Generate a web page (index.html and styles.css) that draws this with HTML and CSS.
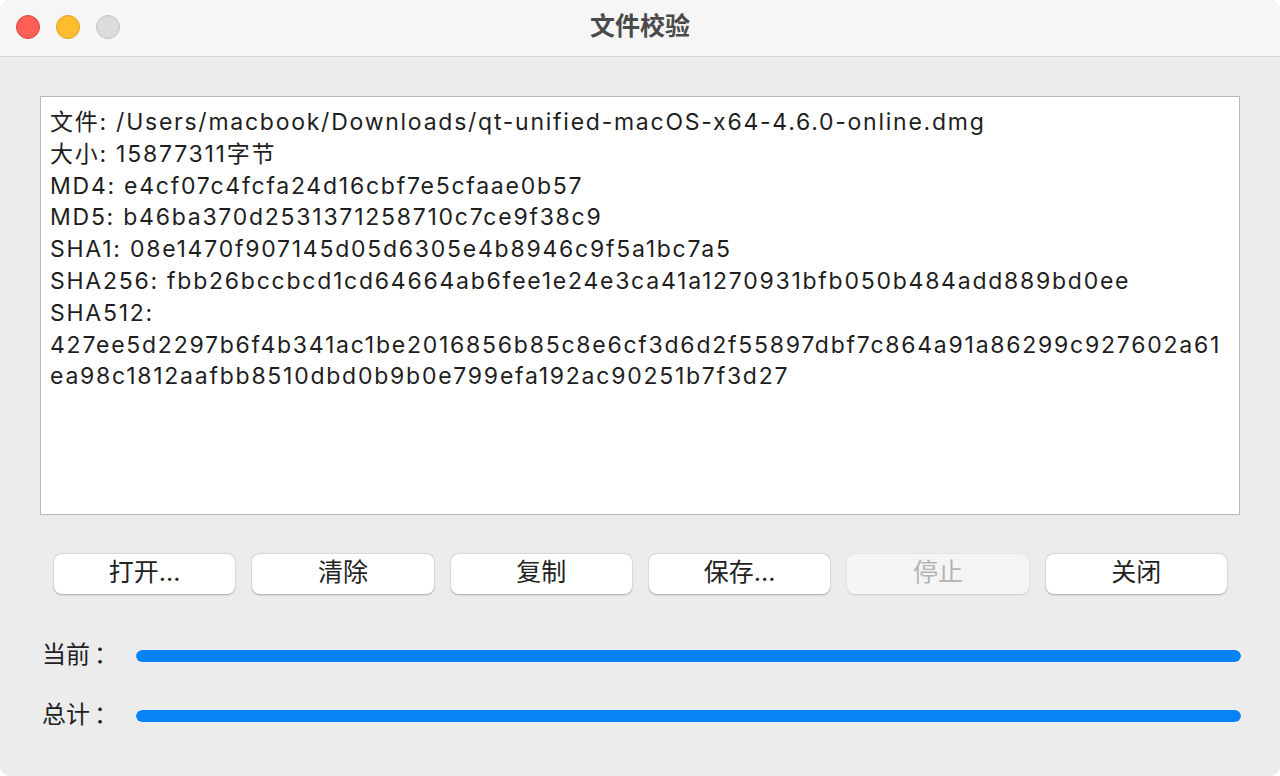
FILE: index.html
```html
<!DOCTYPE html>
<html lang="zh-CN">
<head>
    <meta charset="UTF-8">
    <meta name="viewport" content="width=device-width, initial-scale=1.0">
    <title>文件校验</title>
    <link rel="stylesheet" href="styles.css">
</head>
<body>
    <div class="window">
        <div class="titlebar">
            <div class="lights">
                <span class="light close"></span>
                <span class="light minimize"></span>
                <span class="light zoom"></span>
            </div>
            <div class="title">文件校验</div>
        </div>
        <div class="content">
            <div class="output">
                <div>文件: /Users/macbook/Downloads/qt-unified-macOS-x64-4.6.0-online.dmg</div>
                <div>大小: 15877311字节</div>
                <div>MD4: e4cf07c4fcfa24d16cbf7e5cfaae0b57</div>
                <div>MD5: b46ba370d2531371258710c7ce9f38c9</div>
                <div>SHA1: 08e1470f907145d05d6305e4b8946c9f5a1bc7a5</div>
                <div>SHA256: fbb26bccbcd1cd64664ab6fee1e24e3ca41a1270931bfb050b484add889bd0ee</div>
                <div>SHA512:</div>
                <div>427ee5d2297b6f4b341ac1be2016856b85c8e6cf3d6d2f55897dbf7c864a91a86299c927602a61</div>
                <div>ea98c1812aafbb8510dbd0b9b0e799efa192ac90251b7f3d27</div>
            </div>
            <div class="buttons">
                <button>打开...</button>
                <button>清除</button>
                <button>复制</button>
                <button>保存...</button>
                <button disabled>停止</button>
                <button>关闭</button>
            </div>
            <div class="progress-row first">
                <span class="label">当前<span class="colon">：</span></span>
                <div class="bar"><div class="fill" style="width: 100%;"></div></div>
            </div>
            <div class="progress-row">
                <span class="label">总计<span class="colon">：</span></span>
                <div class="bar"><div class="fill" style="width: 100%;"></div></div>
            </div>
        </div>
    </div>
</body>
</html>
```

FILE: styles.css
```css
html, body {
    margin: 0;
    padding: 0;
    background-color: #ffffff;
}
body {
    font-family: Inter, "Noto Sans CJK SC", sans-serif;
    color: #222;
}
.window {
    width: 1280px;
    height: 776px;
    background-color: #ececec;
    border-radius: 10px;
    overflow: hidden;
    display: flex;
    flex-direction: column;
}
.titlebar {
    height: 56px;
    background-color: #f6f6f6;
    border-bottom: 1px solid #d4d4d4;
    display: flex;
    align-items: center;
    position: relative;
}
.lights {
    display: flex;
    gap: 16px;
    padding-left: 16px;
    margin-top: -2px;
}
.light {
    width: 24px;
    height: 24px;
    border-radius: 50%;
    box-sizing: border-box;
}
.close {
    background-color: #fe5f57;
    border: 1px solid #e0443e;
}
.minimize {
    background-color: #febc2e;
    border: 1px solid #dea123;
}
.zoom {
    background-color: #dcdcdc;
    border: 1px solid #c4c4c4;
}
.title {
    position: absolute;
    left: 0;
    right: 0;
    top: 8px;
    text-align: center;
    font-size: 25px;
    line-height: 36px;
    font-weight: bold;
    color: #4a4a4a;
    pointer-events: none;
}
.content {
    flex: 1;
    padding: 39px 40px 0 40px;
}
.output {
    height: 419px;
    box-sizing: border-box;
    background-color: #fff;
    border: 1px solid #b8b8b8;
    padding: 10px 9px 6px 9px;
    font-size: 23px;
    line-height: 31.8px;
    letter-spacing: 1.75px;
    color: #1e1e1e;
    white-space: nowrap;
    overflow: hidden;
}
.buttons {
    display: flex;
    gap: 17px;
    padding: 0 13px 0 14px;
    margin-top: 39px;
}
.buttons button {
    flex: 1;
    height: 40px;
    background-color: #fff;
    border: none;
    border-radius: 8px;
    box-shadow: 0 0.5px 2px rgba(0, 0, 0, 0.3);
    font-family: inherit;
    font-size: 25px;
    line-height: 32px;
    color: #222;
    padding: 0 0 4px 0;
}
.buttons button:disabled {
    background-color: #f5f5f5;
    color: #b3b3b3;
    box-shadow: 0 0.5px 1.5px rgba(0, 0, 0, 0.15);
}
.progress-row {
    display: flex;
    align-items: center;
    height: 24px;
    margin-top: 36px;
    padding-left: 2px;
}
.progress-row.first {
    margin-top: 50px;
}
.label {
    width: 94px;
    font-size: 24px;
    line-height: 24px;
    padding-bottom: 3px;
    color: #222;
}
.colon {
    margin-left: 4px;
}
.bar {
    flex: 1;
    height: 12px;
    margin-right: -1px;
    border-radius: 6px;
    background-color: #dcdcdc;
    overflow: hidden;
}
.fill {
    height: 100%;
    background-color: #0883f6;
    border-radius: 6px;
}
```
